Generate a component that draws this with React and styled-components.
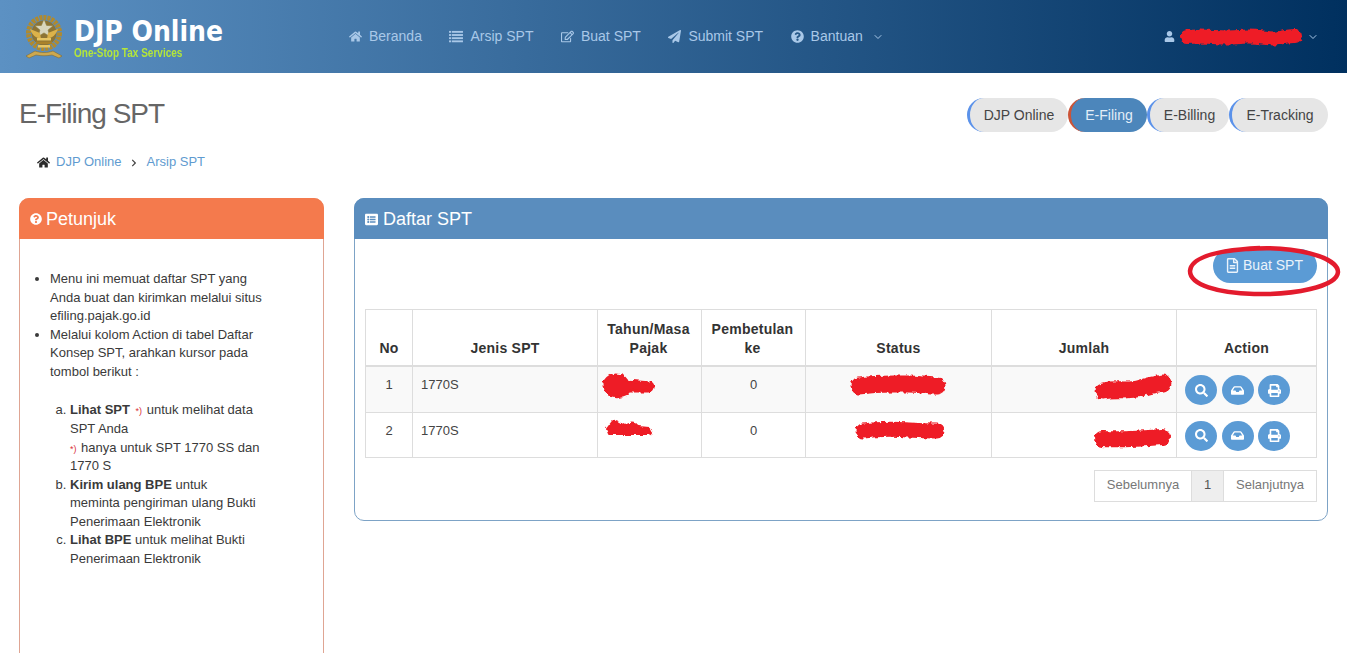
import React, { useId } from 'react';
import styled, { createGlobalStyle } from 'styled-components';
import { FaHome, FaRegEdit, FaPaperPlane, FaQuestionCircle, FaUser, FaSearch, FaInbox, FaPrint, FaRegFileAlt, FaListAlt, FaChevronRight } from 'react-icons/fa';
import { ChevronDown } from 'lucide-react';

const Global = createGlobalStyle`
  html, body { margin: 0; padding: 0; height: 653px; overflow: hidden; background: #fff; }
  body { font-family: "Liberation Sans", Arial, sans-serif; font-size: 13px; line-height: 18.57px; color: #333; }
`;

const Header = styled.header`
  height: 73px; display: flex; align-items: center; padding: 0 28px 0 25px;
  background: linear-gradient(to right, #5c91c3 0%, #00305f 100%);
`;
const Brand = styled.div`display: flex; align-items: center; width: 324px; flex: none;`;
const BrandText = styled.div`margin-left: 11px; display: flex; flex-direction: column; margin-top: 2px;`;
const BrandName = styled.div`
  font-family: "DejaVu Sans", sans-serif; font-stretch: condensed; font-weight: 700; font-size: 28px; line-height: 30px; color: #fff; white-space: nowrap;
`;
const BrandTag = styled.div`
  font-family: "Liberation Sans", sans-serif; font-weight: 700; font-size: 12px; line-height: 12px; color: #b4e63a; white-space: nowrap;
  transform: scaleX(.835); transform-origin: left center;
`;
const Nav = styled.nav`display: flex; align-items: center; gap: 27.5px;`;
const NavItem = styled.a`
  display: flex; align-items: center; gap: 7px; font-size: 14px; color: #a9c8e8;
  svg { flex: none; }
`;
const UserBox = styled.div`display: flex; align-items: center; margin-left: auto; color: #a9c8e8; gap: 4px;`;

const TitleRow = styled.div`display: flex; justify-content: space-between; padding: 25px 19px 0; height: 48px;`;
const PageTitle = styled.h1`margin: 0; font-weight: 400; font-size: 28px; line-height: 32px; color: #666; letter-spacing: -1px;`;
const Pills = styled.div`display: flex;`;
const Pill = styled.div`
  height: 34px; box-sizing: border-box; display: flex; align-items: center; justify-content: center;
  width: ${p => p.$w}px; border-radius: 17px; font-size: 14px;
  background: ${p => (p.$active ? '#4c86bb' : '#e6e6e6')};
  color: ${p => (p.$active ? '#e3eef8' : '#444')};
  border-left: 3px solid ${p => (p.$active ? '#cb5438' : '#5b92ea')};
`;
const Crumbs = styled.div`display: flex; align-items: center; padding: 3px 37px 0; height: 30px; box-sizing: border-box; color: #333; `;
const CrumbLink = styled.a`color: #5f9bd0; font-size: 13px;`;
const CrumbIcon = styled.span`display: flex; margin-right: 6px; color: #2b2b2b;`;
const CrumbSep = styled.span`display: flex; margin: 0 9px 0 8px; color: #444;`;

const Columns = styled.div`display: flex; gap: 30px; padding: 22px 20px 0 19px; align-items: flex-start;`;
const Panel = styled.section`
  position: relative; box-sizing: border-box; flex: ${p => p.$side ? '0 0 305px' : '1'}; ${p => p.$side ? 'height: 600px;' : ''}
  border: 1px solid ${p => p.$side ? '#dfa593' : '#7da3c6'}; border-radius: 10px;
`;
const PanelHead = styled.div`
  margin: -1px -1px 0; height: 41px; box-sizing: border-box; padding-top: 1px; border-radius: 10px 10px 0 0; display: flex; align-items: center; padding-left: 11px; gap: ${p => p.$side ? 4 : 5}px;
  background: ${p => p.$side ? '#f47a4d' : '#5a8dbe'}; color: #fff; font-size: 18px;
`;
const SideBody = styled.div`padding: 31px 15px 0;`;
const Bullets = styled.ul`margin: 0; padding: 0 0 0 15px; color: #3a3a3a;`;
const Letters = styled.ol`list-style: lower-alpha; margin: 0; padding: 0 0 0 35px; color: #3a3a3a; margin-top: 20px;`;
const Mark = styled.span`color: #d9303a; font-size: 9px; line-height: 0; margin: 0 1px 0 ${p => p.$lead ? 0 : 2}px;`;
const Strong = styled.b`font-weight: 700;`;

const MainBody = styled.div`padding: 10px 10px 18px;`;
const Toolbar = styled.div`display: flex; justify-content: flex-end; height: 60px;`;
const PrimaryBtn = styled.button`
  height: 34px; width: 104px; border: 0; border-radius: 17px; background: #5b9bd5; color: #eaf3fb; font: 14px "Liberation Sans", sans-serif;
  display: flex; align-items: center; justify-content: center; gap: 3px; padding: 0 2px 2px 0;
`;
const Table = styled.table`width: 951px; table-layout: fixed; border-collapse: collapse; font-size: 13px;`;
const Th = styled.th`
  border: 1px solid #ddd; border-bottom-width: 2px; padding: 10px 8px 8px; vertical-align: bottom; text-align: center;
  font-size: 14px; letter-spacing: .25px; color: #333; font-weight: 700; white-space: normal;
  ${p => p.$tight ? 'padding-left:1px;padding-right:3px;' : ''}
`;
const Tr = styled.tr`background: ${p => p.$odd ? '#f9f9f9' : '#fff'}; height: ${p => p.$h}px;`;
const Td = styled.td`
  border: 1px solid #ddd; padding: 9px 8px 8px; vertical-align: top; color: #444; text-align: ${p => p.$align || 'left'}; font-size: 13px;
  ${p => p.$flush ? 'padding-top:6px;padding-bottom:0;' : ''}
`;
const Actions = styled.div`display: flex; gap: 4.5px; margin-top: 2px;`;
const RoundBtn = styled.button`
  width: 32px; height: 30px; border: 0; border-radius: 50%; background: #5b9bd5; color: #fff; padding: 0;
  display: flex; align-items: center; justify-content: center;
`;
const Pager = styled.div`display: flex; justify-content: flex-end; margin-top: 12px;`;
const PageCell = styled.div`
  height: 32px; box-sizing: border-box; border: 1px solid #ddd; margin-left: -1px; display: flex; align-items: center; font-size: 13px;
  background: ${p => p.$active ? '#eee' : '#fff'}; color: ${p => p.$active ? '#555' : '#777'};
  width: ${p => p.$w}px; justify-content: center;
`;
const ScribbleSvg = styled.svg`display: block; overflow: visible;`;
const Circle = styled.svg`position: absolute; left: 833px; top: 46px; pointer-events: none; overflow: visible;`;

const Scribble = ({ w, h, d, sw = 12, ml = 0, mt = 0, fill = 'none' }) => {
  const id = useId().replace(/[^a-zA-Z0-9]/g, '');
  return (
    <ScribbleSvg width={w} height={h} viewBox={`0 0 ${w} ${h}`} style={{ marginLeft: ml, marginTop: mt }}>
      <filter id={id} filterUnits="userSpaceOnUse" x={-12} y={-12} width={w + 24} height={h + 24}>
        <feTurbulence type="fractalNoise" baseFrequency=".2" numOctaves="2" seed="4" result="n" />
        <feDisplacementMap in="SourceGraphic" in2="n" scale="5" xChannelSelector="R" yChannelSelector="G" />
      </filter>
      <path d={d} fill={fill} stroke="#ee1c25" strokeWidth={sw} strokeLinecap="round" strokeLinejoin="round" filter={`url(#${id})`} />
    </ScribbleSvg>
  );
};

const ListIcon = ({ size = 14 }) => (
  <svg width={size + 1} height={size} viewBox="0 0 15 14" fill="currentColor">
    {[1, 4.4, 7.8, 11.2].map(y => (
      <g key={y}>
        <rect x="0" y={y} width="2.4" height="2" />
        <rect x="3.2" y={y} width="11.8" height="2" />
      </g>
    ))}
  </svg>
);

const Emblem = () => (
  <svg width="38" height="46" viewBox="0 0 38 46" style={{ flex: 'none' }}>
    <circle cx="19" cy="19" r="15.5" fill="none" stroke="#b08a2e" strokeWidth="5" strokeDasharray="3 1" />
    <circle cx="19" cy="19" r="12.5" fill="#8d7434" />
    <path d="M19 5l2.6 6.4 6.6.4-5.1 4.2 1.7 6.5L19 18.9l-5.8 3.6 1.7-6.5-5.1-4.2 6.6-.4z" fill="#d8d6bd" stroke="#8a7a3c" strokeWidth=".6" />
    <path d="M5 15c2 6 6 9 11 10l-1-6zM33 15c-2 6-6 9-11 10l1-6z" fill="#dcb24a" />
    <rect x="12" y="24" width="14" height="2.5" fill="#e6c564" />
    <rect x="11" y="27.5" width="16" height="2.5" fill="#a9822a" />
    <rect x="13" y="31" width="12" height="2.5" fill="#e6c564" />
    <path d="M1 42l9-5c6 2 12 2 18 0l9 5-3 2-7-3c-6 1-10 1-16 0l-7 3z" fill="#cda84f" stroke="#7d6427" strokeWidth=".5" />
  </svg>
);

const navItems = [
  [FaHome, 'Beranda'], [ListIcon, 'Arsip SPT'], [FaRegEdit, 'Buat SPT'], [FaPaperPlane, 'Submit SPT'], [FaQuestionCircle, 'Bantuan'],
];
const pills = [['DJP Online', 101], ['E-Filing', 79, true], ['E-Billing', 82], ['E-Tracking', 99]];

const ActionCell = () => (
  <Actions>
    <RoundBtn><FaSearch size={13} /></RoundBtn>
    <RoundBtn><FaInbox size={13} /></RoundBtn>
    <RoundBtn><FaPrint size={13} /></RoundBtn>
  </Actions>
);

export default function App() {
  return (
    <>
      <Global />
      <Header>
        <Brand>
          <Emblem />
          <BrandText>
            <BrandName>DJP Online</BrandName>
            <BrandTag>One-Stop Tax Services</BrandTag>
          </BrandText>
        </Brand>
        <Nav>
          {navItems.map(([I, t]) => (
            <NavItem key={t}>
              <I size={13} />{t}
              {t === 'Bantuan' && <ChevronDown size={12} style={{ marginLeft: 2 }} />}
            </NavItem>
          ))}
        </Nav>
        <UserBox>
          <FaUser size={11} />
          <Scribble w={124} h={18} sw={14} d="M8 9 C30 7 40 11 60 9 S90 12 100 10 S110 8 116 8" />
          <ChevronDown size={12} />
        </UserBox>
      </Header>
      <TitleRow>
        <PageTitle>E-Filing SPT</PageTitle>
        <Pills>
          {pills.map(([t, w, a]) => <Pill key={t} $w={w} $active={a}>{t}</Pill>)}
        </Pills>
      </TitleRow>
      <Crumbs>
        <CrumbIcon><FaHome size={13} /></CrumbIcon>
        <CrumbLink>DJP Online</CrumbLink>
        <CrumbSep><FaChevronRight size={8} /></CrumbSep>
        <CrumbLink>Arsip SPT</CrumbLink>
      </Crumbs>
      <Columns>
        <Panel $side>
          <PanelHead $side><FaQuestionCircle size={12} />Petunjuk</PanelHead>
          <SideBody>
            <Bullets>
              <li>Menu ini memuat daftar SPT yang<br />Anda buat dan kirimkan melalui situs<br />efiling.pajak.go.id</li>
              <li>Melalui kolom Action di tabel Daftar<br />Konsep SPT, arahkan kursor pada<br />tombol berikut :</li>
            </Bullets>
            <Letters>
              <li><Strong>Lihat SPT</Strong> <Mark>*)</Mark> untuk melihat data<br />SPT Anda<br /><Mark $lead>*)</Mark> hanya untuk SPT 1770 SS dan<br />1770 S</li>
              <li><Strong>Kirim ulang BPE</Strong> untuk<br />meminta pengiriman ulang Bukti<br />Penerimaan Elektronik</li>
              <li><Strong>Lihat BPE</Strong> untuk melihat Bukti<br />Penerimaan Elektronik</li>
            </Letters>
          </SideBody>
        </Panel>
        <Panel>
          <PanelHead><FaListAlt size={13} />Daftar SPT</PanelHead>
          <MainBody>
            <Toolbar>
              <PrimaryBtn><FaRegFileAlt size={15} />Buat SPT</PrimaryBtn>
            </Toolbar>
            <Table>
              <colgroup>
                {[47, 185, 104, 104, 186, 185, 140].map((w, i) => <col key={i} width={w} />)}
              </colgroup>
              <thead>
                <tr>
                  <Th>No</Th><Th>Jenis SPT</Th><Th $tight>Tahun/Masa Pajak</Th><Th $tight>Pembetulan ke</Th><Th>Status</Th><Th>Jumlah</Th><Th>Action</Th>
                </tr>
              </thead>
              <tbody>
                <Tr $odd $h={46}>
                  <Td $align="center">1</Td><Td>1770S</Td>
                  <Td $flush><Scribble w={54} h={26} ml={-5} sw={3} fill="#ee1c25" d="M4 8 C10 -1 22 1 26 8 L50 10 C54 14 52 18 46 18 L28 18 C24 24 12 26 8 20 C2 16 2 12 4 8Z" /></Td>
                  <Td $align="center">0</Td>
                  <Td $flush><Scribble w={98} h={24} ml={35} sw={17} d="M10 13 C30 10 45 11 58 11 S80 13 88 13" /></Td>
                  <Td $flush><Scribble w={80} h={28} ml={93} sw={17} d="M10 18 C25 15 35 19 48 15 S62 12 70 10" /></Td>
                  <Td $flush style={{ padding: '6px 8px 0' }}><ActionCell /></Td>
                </Tr>
                <Tr $h={45}>
                  <Td $align="center">2</Td><Td>1770S</Td>
                  <Td $flush><Scribble w={50} h={18} ml={-3} sw={2} fill="#ee1c25" d="M4 10 L10 2 C14 0 18 6 22 7 C28 3 32 4 36 8 L46 9 C50 12 48 15 44 15 L6 15Z" /></Td>
                  <Td $align="center">0</Td>
                  <Td $flush><Scribble w={92} h={22} ml={40} sw={15} d="M9 12 C25 10 40 10 55 11 S78 12 83 12" /></Td>
                  <Td $flush><Scribble w={78} h={20} ml={93} mt={8} sw={16} d="M9 12 C25 13 45 12 69 10" /></Td>
                  <Td $flush style={{ padding: '6px 8px 0' }}><ActionCell /></Td>
                </Tr>
              </tbody>
            </Table>
            <Pager>
              <PageCell $w={98}>Sebelumnya</PageCell>
              <PageCell $w={33} $active>1</PageCell>
              <PageCell $w={94}>Selanjutnya</PageCell>
            </Pager>
          </MainBody>
          <Circle width="152" height="52" viewBox="0 0 152 52">
            <path d="M60 4 C105 0 150 12 150 27 C149 42 105 50 66 49 C30 48 2 40 2 26 C3 12 30 5 72 3" fill="none" stroke="#e31b2d" strokeWidth="4.5" />
          </Circle>
        </Panel>
      </Columns>
    </>
  );
}
